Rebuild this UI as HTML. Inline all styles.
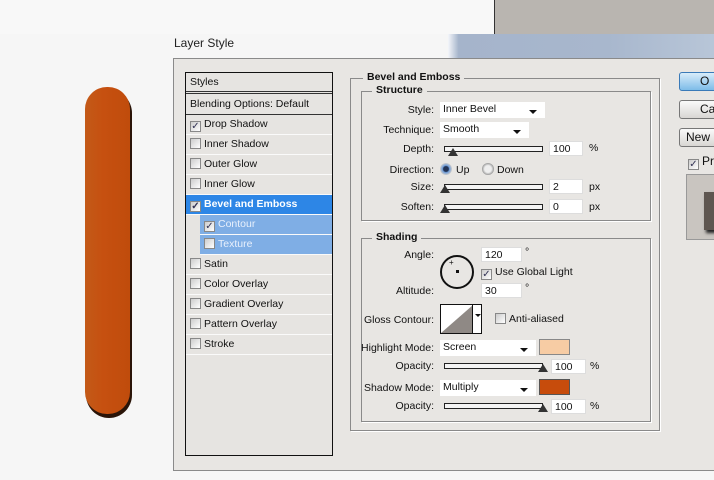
<!DOCTYPE html>
<html><head><style>
*{margin:0;padding:0;box-sizing:border-box}
body{width:714px;height:480px;overflow:hidden;background:#f6f6f6;position:relative;font-family:"Liberation Sans",sans-serif;font-size:10.5px;color:#111}
.a{position:absolute}
.row{position:absolute;left:186px;width:146px;height:20px;border-bottom:1px solid #fafafa;line-height:19px;padding-left:4px;white-space:nowrap}
.cb{display:inline-block;width:11px;height:11px;border:1px solid #888;background:linear-gradient(135deg,#ccc,#fff);vertical-align:-2px;margin-right:3px;font-size:10px;line-height:9px;text-align:center;color:#335}
.fs{position:absolute;border:1px solid #8a8a8a;box-shadow:1px 1px 0 #fff}
.lg{position:absolute;background:#e8e6e3;font-weight:bold;font-size:10.5px;padding:0 4px}
.lbl{position:absolute;text-align:right;width:80px}
.inp{position:absolute;background:#fff;border:1px solid #ddd;height:15px;line-height:14px;padding-left:3px}
.sl{position:absolute;height:6px;border:1px solid #222;background:#f4f4f4}
.th{position:absolute;width:0;height:0;border-left:5px solid transparent;border-right:5px solid transparent;border-bottom:8px solid #333}
.dd{position:absolute;background:#fff;height:16px;line-height:15px;padding-left:3px}
.dd:after{content:"";position:absolute;right:8px;top:8px;border-left:4px solid transparent;border-right:4px solid transparent;border-top:4px solid #111}
.btn{position:absolute;left:679px;width:50px;height:19px;border:1px solid #777;border-radius:3px;background:linear-gradient(#fafafa,#d8d6d3);font-size:12px;line-height:17px;padding-left:20px}
</style></head><body>
<div class="a" style="left:0;top:0;width:494px;height:34px;background:#f8f8f8"></div>
<div class="a" style="left:494px;top:0;width:220px;height:34px;background:#b9b5b0;border-left:1px solid #333"></div>
<div class="a" style="left:448px;top:34px;width:266px;height:24px;background:linear-gradient(90deg,#f4f6fa,#a5b4cb 4%,#a8b7cd 60%,#b8c6d8)"></div>
<div class="a" style="left:174px;top:36px;font-size:12px;color:#222">Layer Style</div>
<div class="a" style="left:86px;top:90px;width:46px;height:328px;border-radius:23px;background:#2a1408;"></div>
<div class="a" style="left:85px;top:87px;width:45px;height:327px;border-radius:22px;background:linear-gradient(90deg,#c35a18,#c65010 40%,#c04c0c);"></div>
<div class="a" style="left:173px;top:58px;width:545px;height:413px;background:#e8e6e3;border:1px solid #8a8a8a"></div>
<div class="a" style="left:185px;top:72px;width:148px;height:384px;border:1px solid #111;background:#e6e4e1"></div>
<div class="row" style="top:73px;border-bottom:3px double #333;height:21px">Styles</div>
<div class="row" style="top:95px;border-bottom:1px solid #333">Blending Options: Default</div>
<div class="row" style="top:115px"><span class="cb">✓</span>Drop Shadow</div>
<div class="row" style="top:135px"><span class="cb"></span>Inner Shadow</div>
<div class="row" style="top:155px"><span class="cb"></span>Outer Glow</div>
<div class="row" style="top:175px"><span class="cb"></span>Inner Glow</div>
<div class="row" style="top:195px;background:#2d86e6;color:#fff;font-weight:bold"><span class="cb">✓</span>Bevel and Emboss</div>
<div class="row" style="top:215px;left:200px;width:132px;background:#7faee5;color:#e8f0fc"><span class="cb">✓</span>Contour</div>
<div class="row" style="top:235px;left:200px;width:132px;background:#7faee5;color:#e8f0fc"><span class="cb"></span>Texture</div>
<div class="row" style="top:255px"><span class="cb"></span>Satin</div>
<div class="row" style="top:275px"><span class="cb"></span>Color Overlay</div>
<div class="row" style="top:295px"><span class="cb"></span>Gradient Overlay</div>
<div class="row" style="top:315px"><span class="cb"></span>Pattern Overlay</div>
<div class="row" style="top:335px"><span class="cb"></span>Stroke</div>

<div class="fs" style="left:350px;top:78px;width:310px;height:353px"></div>
<div class="lg" style="left:363px;top:71px">Bevel and Emboss</div>
<div class="fs" style="left:361px;top:91px;width:290px;height:130px"></div>
<div class="lg" style="left:372px;top:84px">Structure</div>
<div class="lbl" style="left:354px;top:104px">Style:</div>
<div class="dd" style="left:440px;top:102px;width:105px">Inner Bevel</div>
<div class="lbl" style="left:354px;top:124px">Technique:</div>
<div class="dd" style="left:440px;top:122px;width:89px">Smooth</div>
<div class="lbl" style="left:354px;top:143px">Depth:</div>
<div class="sl" style="left:444px;top:146px;width:99px"></div><div class="th" style="left:448px;top:148px"></div>
<div class="inp" style="left:549px;top:141px;width:34px">100</div><div class="a" style="left:589px;top:142px">%</div>
<div class="lbl" style="left:354px;top:164px">Direction:</div>
<div class="a" style="left:440px;top:163px;width:12px;height:12px;border-radius:50%;background:radial-gradient(#235 30%,#6b9ad8 40%,#ccc 70%)"></div>
<div class="a" style="left:456px;top:164px">Up</div>
<div class="a" style="left:482px;top:163px;width:12px;height:12px;border-radius:50%;background:radial-gradient(#eee 40%,#999 70%)"></div>
<div class="a" style="left:497px;top:164px">Down</div>
<div class="lbl" style="left:354px;top:181px">Size:</div>
<div class="sl" style="left:444px;top:184px;width:99px"></div><div class="th" style="left:440px;top:185px"></div>
<div class="inp" style="left:549px;top:179px;width:34px">2</div><div class="a" style="left:589px;top:181px">px</div>
<div class="lbl" style="left:354px;top:201px">Soften:</div>
<div class="sl" style="left:444px;top:204px;width:99px"></div><div class="th" style="left:440px;top:205px"></div>
<div class="inp" style="left:549px;top:199px;width:34px">0</div><div class="a" style="left:589px;top:201px">px</div>

<div class="fs" style="left:361px;top:238px;width:290px;height:184px"></div>
<div class="lg" style="left:372px;top:231px">Shading</div>
<div class="lbl" style="left:354px;top:249px">Angle:</div>
<div class="inp" style="left:481px;top:247px;width:41px">120</div><div class="a" style="left:525px;top:246px">°</div>
<div class="a" style="left:440px;top:255px;width:34px;height:34px;border:2px solid #111;border-radius:50%"></div>
<div class="a" style="left:456px;top:270px;width:3px;height:3px;background:#111"></div>
<div class="a" style="left:449px;top:258px;font-size:8px">+</div>
<div class="a" style="left:481px;top:266px"><span class="cb">✓</span>Use Global Light</div>
<div class="lbl" style="left:354px;top:285px">Altitude:</div>
<div class="inp" style="left:481px;top:283px;width:41px">30</div><div class="a" style="left:525px;top:282px">°</div>
<div class="lbl" style="left:354px;top:314px">Gloss Contour:</div>
<div class="a" style="left:440px;top:304px;width:42px;height:30px;border:1px solid #111;background:#fff">
<svg width="32" height="28" style="position:absolute;left:0;top:0"><polygon points="0,28 32,0 32,28" fill="#8f8985"/></svg>
<div class="a" style="left:31px;top:0;width:1px;height:28px;background:#111"></div>
<div class="a" style="left:34px;top:9px;border-left:3px solid transparent;border-right:3px solid transparent;border-top:3px solid #111"></div></div>
<div class="a" style="left:495px;top:313px"><span class="cb"></span>Anti-aliased</div>
<div class="lbl" style="left:354px;top:342px">Highlight Mode:</div>
<div class="dd" style="left:440px;top:340px;width:96px">Screen</div>
<div class="a" style="left:539px;top:339px;width:31px;height:16px;background:#f7cca4;border:1px solid #888"></div>
<div class="lbl" style="left:354px;top:360px">Opacity:</div>
<div class="sl" style="left:444px;top:363px;width:99px"></div><div class="th" style="left:538px;top:364px"></div>
<div class="inp" style="left:551px;top:359px;width:35px">100</div><div class="a" style="left:590px;top:360px">%</div>
<div class="lbl" style="left:354px;top:382px">Shadow Mode:</div>
<div class="dd" style="left:440px;top:380px;width:96px">Multiply</div>
<div class="a" style="left:539px;top:379px;width:31px;height:16px;background:#c74c0c;border:1px solid #555"></div>
<div class="lbl" style="left:354px;top:400px">Opacity:</div>
<div class="sl" style="left:444px;top:403px;width:99px"></div><div class="th" style="left:538px;top:404px"></div>
<div class="inp" style="left:551px;top:399px;width:35px">100</div><div class="a" style="left:590px;top:400px">%</div>

<div class="btn" style="top:72px;border-color:#3a7ab8;background:linear-gradient(#d8ecfa,#7ebce8)">O</div>
<div class="btn" style="top:100px">Ca</div>
<div class="btn" style="top:128px;padding-left:6px">New</div>
<div class="a" style="left:688px;top:154px;font-size:12px"><span class="cb">✓</span>Pr</div>
<div class="a" style="left:686px;top:174px;width:40px;height:66px;border:1px solid #999;background:#c9c5c0"></div>
<div class="a" style="left:704px;top:192px;width:20px;height:38px;background:#5e5650;box-shadow:2px 3px 3px #222"></div>
</body></html>
